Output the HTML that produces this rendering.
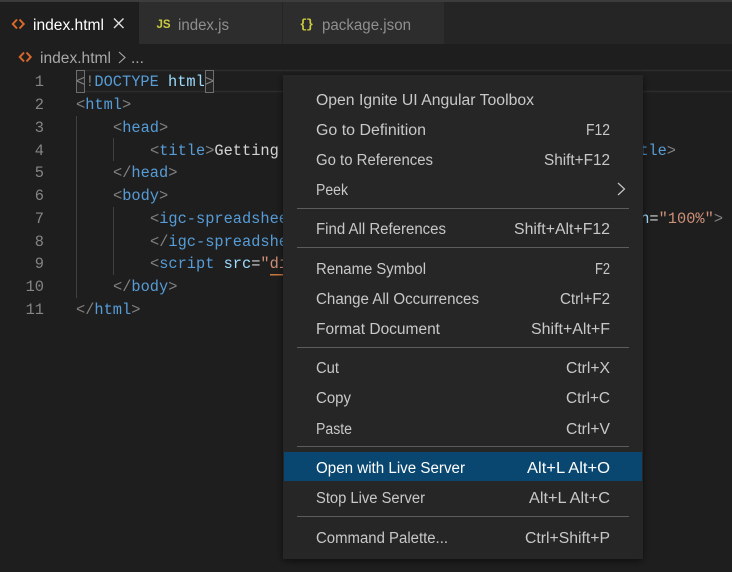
<!DOCTYPE html>
<html><head><meta charset="utf-8"><style>
html,body{margin:0;padding:0;background:#1e1e1e;width:732px;height:572px;overflow:hidden}
svg{display:block}
.u{font-family:"Liberation Sans",sans-serif;font-size:15.5px;fill:#c8c8c8}
.c{font-family:"Liberation Mono",monospace;font-size:15.33px;fill:#808080;white-space:pre}
.t{fill:#569cd6}.a{fill:#9cdcfe}.s{fill:#ce9178}.d{fill:#d4d4d4}
.n{font-family:"Liberation Mono",monospace;font-size:15.33px;fill:#858585;text-anchor:end}
</style></head><body>
<svg width="732" height="572" viewBox="0 0 732 572" xmlns="http://www.w3.org/2000/svg">
<defs><filter id="sh" x="-10%" y="-10%" width="120%" height="120%"><feDropShadow dx="0" dy="2" stdDeviation="4" flood-color="#000" flood-opacity=".55"/></filter></defs>
<rect width="732" height="572" fill="#1e1e1e"/>
<rect width="732" height="44" fill="#252526"/>
<rect width="732" height="2" fill="#3c3c3c"/>
<rect x="0" y="2" width="139" height="42" fill="#1e1e1e"/>
<rect x="139" y="2" width="144" height="42" fill="#2d2d2d"/>
<rect x="283" y="2" width="161" height="42" fill="#2d2d2d"/>
<rect x="282" y="2" width="1" height="42" fill="#252526"/>
<rect x="444" y="2" width="1" height="42" fill="#252526"/>

<path d="M17 19.500l-4.200 4.500 4.200 4.500M19.500 19.500l4.200 4.500-4.200 4.500" fill="none" stroke="#d9692c" stroke-width="2"/>
<text x="33" y="30" class="u" style="fill:#fff" textLength="71" lengthAdjust="spacingAndGlyphs">index.html</text>
<path d="M114 18.500l9.500 9.500M123.500 18.500l-9.500 9.500" fill="none" stroke="#e0e0e0" stroke-width="1.400"/>
<text x="156.500" y="28" style="font:bold 11.500px 'Liberation Sans',sans-serif;fill:#cbcb41">JS</text>
<text x="178" y="30" class="u" style="fill:#8f8f8f" textLength="51" lengthAdjust="spacingAndGlyphs">index.js</text>
<text x="299.500" y="28" style="font:bold 13px 'Liberation Mono',monospace;fill:#cbcb41">{</text>
<text x="306" y="28" style="font:bold 13px 'Liberation Mono',monospace;fill:#cbcb41">}</text>
<text x="322" y="30" class="u" style="fill:#8f8f8f" textLength="89" lengthAdjust="spacingAndGlyphs">package.json</text>

<path d="M24 52.500l-4.200 4.500 4.200 4.500M26.500 52.500l4.200 4.500-4.200 4.500" fill="none" stroke="#d9692c" stroke-width="2"/>
<text x="40" y="63" class="u" style="fill:#a8a8a8" textLength="71" lengthAdjust="spacingAndGlyphs">index.html</text>
<path d="M119 52l6 5.500-6 5.500" fill="none" stroke="#a8a8a8" stroke-width="1.100"/>
<text x="131" y="63" class="u" style="fill:#a8a8a8">...</text>

<path d="M76 70.500H732M76 91.500H732" stroke="#2c2c2c" stroke-width="1.500"/>
<rect x="76.500" y="70.500" width="8" height="22" fill="#252525" stroke="#6e6e6e"/>
<rect x="205.500" y="70.500" width="8" height="22" fill="#252525" stroke="#6e6e6e"/>

<path d="M76.500 116V298M113.500 138V161M113.500 207V275" stroke="#404040" fill="none"/>
<rect x="270" y="274" width="14" height="1.500" fill="#c9793f"/>

<text x="44" y="86" class="n">1</text>
<text x="44" y="109" class="n">2</text>
<text x="44" y="132" class="n">3</text>
<text x="44" y="155" class="n">4</text>
<text x="44" y="177" class="n">5</text>
<text x="44" y="200" class="n">6</text>
<text x="44" y="223" class="n">7</text>
<text x="44" y="246" class="n">8</text>
<text x="44" y="268" class="n">9</text>
<text x="44" y="291" class="n">10</text>
<text x="44" y="314" class="n">11</text>

<text x="76" y="86" class="c" xml:space="preserve">&lt;!<tspan class="t">DOCTYPE</tspan> <tspan class="a">html</tspan>&gt;</text>
<text x="76" y="109" class="c">&lt;<tspan class="t">html</tspan>&gt;</text>
<text x="113" y="132" class="c">&lt;<tspan class="t">head</tspan>&gt;</text>
<text x="150" y="155" class="c">&lt;<tspan class="t">title</tspan>&gt;<tspan class="d">Getting</tspan></text>
<text x="113" y="177" class="c">&lt;/<tspan class="t">head</tspan>&gt;</text>
<text x="113" y="200" class="c">&lt;<tspan class="t">body</tspan>&gt;</text>
<text x="150" y="223" class="c">&lt;<tspan class="t">igc-spreadsheet</tspan></text>
<text x="150" y="246" class="c">&lt;/<tspan class="t">igc-spreadsheet</tspan></text>
<text x="150" y="268" class="c" xml:space="preserve">&lt;<tspan class="t">script</tspan> <tspan class="a">src</tspan><tspan class="d">=</tspan><tspan class="s">"dist</tspan></text>
<text x="113" y="291" class="c">&lt;/<tspan class="t">body</tspan>&gt;</text>
<text x="76" y="314" class="c">&lt;/<tspan class="t">html</tspan>&gt;</text>
<text x="630" y="155" class="c"><tspan class="t">itle</tspan>&gt;</text>
<text x="631" y="223" class="c"><tspan class="a">in</tspan><tspan class="d">=</tspan><tspan class="s">"100%"</tspan>&gt;</text>

<rect x="283" y="75" width="360" height="484" fill="#252526" filter="url(#sh)"/>
<rect x="284" y="452" width="358" height="29" fill="#094771"/>
<path d="M297 208.500H629M297 247.500H629M297 347.500H629M297 446.500H629M297 516.500H629" stroke="#5c5c5c"/>
<path d="M618 183l6.500 6-6.500 6" fill="none" stroke="#c6c6c6" stroke-width="1.200"/>

<text x="316" y="105" class="u" textLength="218" lengthAdjust="spacingAndGlyphs">Open Ignite UI Angular Toolbox</text>
<text x="316" y="135" class="u" textLength="110" lengthAdjust="spacingAndGlyphs">Go to Definition</text>
<text x="586" y="135" class="u" textLength="24" lengthAdjust="spacingAndGlyphs">F12</text>
<text x="316" y="165" class="u" textLength="117" lengthAdjust="spacingAndGlyphs">Go to References</text>
<text x="544" y="165" class="u" textLength="66" lengthAdjust="spacingAndGlyphs">Shift+F12</text>
<text x="316" y="195" class="u" textLength="32" lengthAdjust="spacingAndGlyphs">Peek</text>
<text x="316" y="234" class="u" textLength="130" lengthAdjust="spacingAndGlyphs">Find All References</text>
<text x="514" y="234" class="u" textLength="96" lengthAdjust="spacingAndGlyphs">Shift+Alt+F12</text>
<text x="316" y="274" class="u" textLength="110" lengthAdjust="spacingAndGlyphs">Rename Symbol</text>
<text x="595" y="274" class="u" textLength="15" lengthAdjust="spacingAndGlyphs">F2</text>
<text x="316" y="304" class="u" textLength="163" lengthAdjust="spacingAndGlyphs">Change All Occurrences</text>
<text x="560" y="304" class="u" textLength="50" lengthAdjust="spacingAndGlyphs">Ctrl+F2</text>
<text x="316" y="334" class="u" textLength="124" lengthAdjust="spacingAndGlyphs">Format Document</text>
<text x="531" y="334" class="u" textLength="79" lengthAdjust="spacingAndGlyphs">Shift+Alt+F</text>
<text x="316" y="373" class="u" textLength="23" lengthAdjust="spacingAndGlyphs">Cut</text>
<text x="566" y="373" class="u" textLength="44" lengthAdjust="spacingAndGlyphs">Ctrl+X</text>
<text x="316" y="403" class="u" textLength="35" lengthAdjust="spacingAndGlyphs">Copy</text>
<text x="566" y="403" class="u" textLength="44" lengthAdjust="spacingAndGlyphs">Ctrl+C</text>
<text x="316" y="434" class="u" textLength="36" lengthAdjust="spacingAndGlyphs">Paste</text>
<text x="566" y="434" class="u" textLength="44" lengthAdjust="spacingAndGlyphs">Ctrl+V</text>
<text x="316" y="473" class="u" style="fill:#fff" textLength="149" lengthAdjust="spacingAndGlyphs">Open with Live Server</text>
<text x="527" y="473" class="u" style="fill:#fff" textLength="83" lengthAdjust="spacingAndGlyphs">Alt+L Alt+O</text>
<text x="316" y="503" class="u" textLength="109" lengthAdjust="spacingAndGlyphs">Stop Live Server</text>
<text x="529" y="503" class="u" textLength="81" lengthAdjust="spacingAndGlyphs">Alt+L Alt+C</text>
<text x="316" y="543" class="u" textLength="132" lengthAdjust="spacingAndGlyphs">Command Palette...</text>
<text x="525" y="543" class="u" textLength="85" lengthAdjust="spacingAndGlyphs">Ctrl+Shift+P</text>
</svg>
</body></html>
